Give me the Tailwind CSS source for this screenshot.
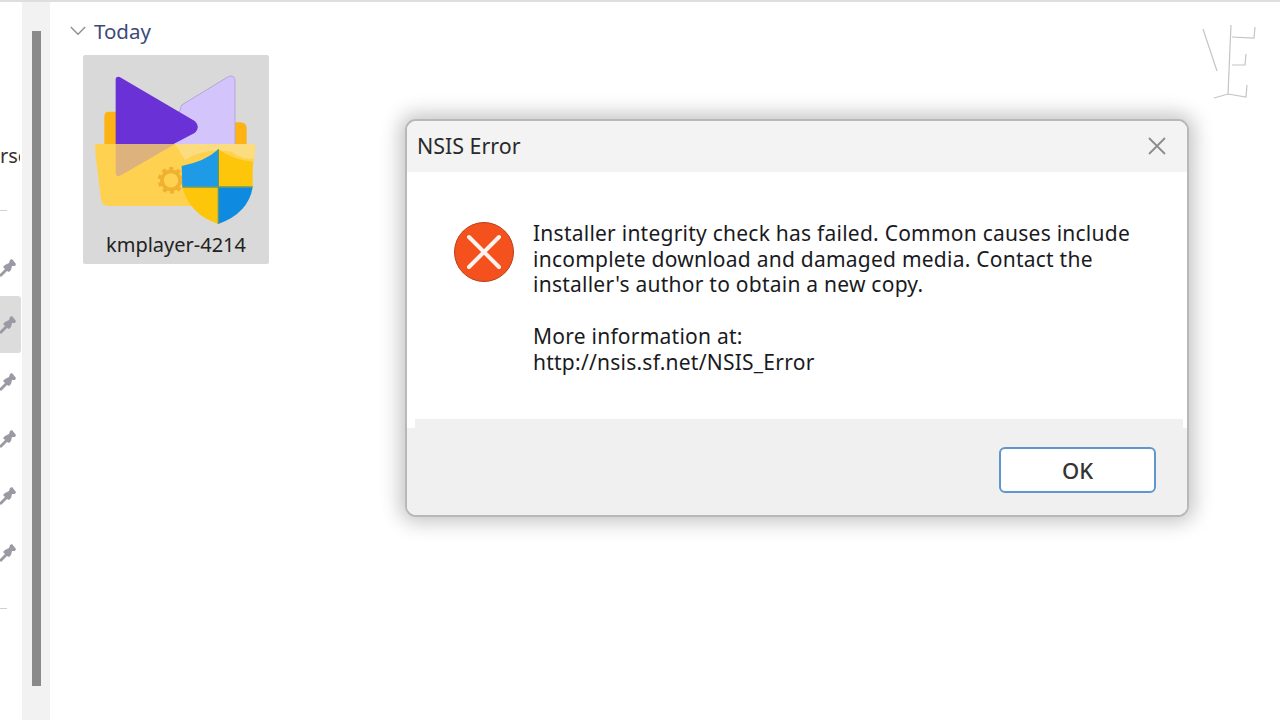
<!doctype html>
<html><head><meta charset="utf-8"><script src="https://cdn.jsdelivr.net/npm/@tailwindcss/browser@4"></script></head>
<body class="bg-white overflow-hidden">
<div class="relative flex w-[1280px] h-[720px] overflow-hidden bg-white border-t-2 border-[#dedede] font-['Noto_Sans',sans-serif]">
  <!-- Left nav sliver -->
  <aside class="w-[22px] shrink-0 flex flex-col overflow-hidden">
    <div class="h-[166px] shrink-0 flex items-end"><span class="block text-[20px] leading-[24px] text-[#333] whitespace-nowrap w-[20px] overflow-hidden">rsc</span></div>
    <div class="h-[43px] shrink-0 flex items-end"><div class="w-[7px] h-px bg-[#d0d0d0]"></div></div>
    <div class="mt-[28px] flex flex-col">
      <div class="h-[57px] flex items-center"><svg class="w-[16px] h-[20px]" viewBox="0 0 16 20"><path d="M-1 17 5 11 3 9 5 7 9 5 10 2 12 1 16 6 15 8 12 8 11 12 9 14 7 13 1 19Z" fill="#9a9aa4"/></svg></div>
      <div class="h-[57px] w-[21px] flex items-center bg-[#dcdcdc] rounded-r-[3px]"><svg class="w-[16px] h-[20px]" viewBox="0 0 16 20"><path d="M-1 17 5 11 3 9 5 7 9 5 10 2 12 1 16 6 15 8 12 8 11 12 9 14 7 13 1 19Z" fill="#9a9aa4"/></svg></div>
      <div class="h-[57px] flex items-center"><svg class="w-[16px] h-[20px]" viewBox="0 0 16 20"><path d="M-1 17 5 11 3 9 5 7 9 5 10 2 12 1 16 6 15 8 12 8 11 12 9 14 7 13 1 19Z" fill="#9a9aa4"/></svg></div>
      <div class="h-[57px] flex items-center"><svg class="w-[16px] h-[20px]" viewBox="0 0 16 20"><path d="M-1 17 5 11 3 9 5 7 9 5 10 2 12 1 16 6 15 8 12 8 11 12 9 14 7 13 1 19Z" fill="#9a9aa4"/></svg></div>
      <div class="h-[57px] flex items-center"><svg class="w-[16px] h-[20px]" viewBox="0 0 16 20"><path d="M-1 17 5 11 3 9 5 7 9 5 10 2 12 1 16 6 15 8 12 8 11 12 9 14 7 13 1 19Z" fill="#9a9aa4"/></svg></div>
      <div class="h-[57px] flex items-center"><svg class="w-[16px] h-[20px]" viewBox="0 0 16 20"><path d="M-1 17 5 11 3 9 5 7 9 5 10 2 12 1 16 6 15 8 12 8 11 12 9 14 7 13 1 19Z" fill="#9a9aa4"/></svg></div>
    </div>
    <div class="mt-[27px] w-[7px] h-px bg-[#d0d0d0] shrink-0"></div>
  </aside>
  <!-- Scroll strip -->
  <div class="w-[28px] shrink-0 bg-[#f2f2f2] pl-[10px] pt-[29px]"><div class="w-[9px] h-[655px] bg-[#8a8a8a]"></div></div>
  <!-- Content -->
  <main class="flex-1 pl-[20px] pt-[16px]">
    <div class="flex items-center gap-[8px] h-[26px]">
      <svg class="w-[16px] h-[10px]" viewBox="0 0 16 10" fill="none" stroke="#8a8f98" stroke-width="1.4"><path d="M.8 1 8 8.200 15.200 1"/></svg>
      <span class="text-[20.500px] text-[#3d4a78] leading-[26px]">Today</span>
    </div>
    <div class="mt-[11px] ml-[13px] w-[186px] h-[209px] bg-[#d9d9d9] rounded-[2px] flex flex-col items-center">
      <svg class="w-[180px] h-[170px] mt-[5px] shrink-0 self-start ml-[2px]" viewBox="0 0 540 510">
        <path d="M70 155Q58 155 58 170V260H485V205Q485 187 465 187H445V155Z" fill="#fdb314"/>
        <path d="M290 135 430 50Q450 42 450 65V260H250Z" fill="#d3c5fb" stroke="#b3a7d8" stroke-width="3" stroke-linejoin="round"/>
        <path d="M100 58 325 190Q335 200 325 212L100 330Z" fill="#6a31d6" stroke="#6a31d6" stroke-width="16" stroke-linejoin="round"/>
        <path d="M30 252H510Q512 280 500 340L480 420Q474 438 450 438H72Q52 438 48 420L32 290Z" fill="#fed250"/>
        <path d="M270 252H510Q512 270 508 296Q470 300 440 275Q360 262 300 300Z" fill="#fbdc7e"/>
        <path d="M92 252H270L108 346Q92 354 92 335Z" fill="#ddb27c"/>
        <circle cx="258" cy="361" r="34" fill="none" stroke="#f0b030" stroke-width="12" stroke-dasharray="12 10"/>
        <circle cx="258" cy="361" r="27" fill="none" stroke="#f0b030" stroke-width="11"/>
        <path d="M290 318 Q360 305 400 268V380H292Z" fill="#1e9ae6"/>
        <path d="M400 268Q445 300 503 305V380H400Z" fill="#fec60a"/>
        <path d="M292 382H400V492Q315 465 292 382Z" fill="#fec60a"/>
        <path d="M400 382H503Q490 460 400 492Z" fill="#0e8be0"/>
        <path d="M400 268V492M292 381H503" stroke="#5e9a6c" stroke-width="4"/>
      </svg>
      <span class="mt-[2px] text-[20px] leading-[26px] text-[#222]">kmplayer-4214</span>
    </div>
  </main>
  <!-- VE watermark -->
  <svg class="absolute left-[1200px] top-[22px] w-[64px] h-[78px]" viewBox="0 0 64 78" fill="none" stroke="#c4c4c4" stroke-width="1.200"><path d="M3 5 17 47M31 1 28 70M14 74 28 70 46 73 47 61M32 13 54 14 55 3M32 41 45 41 46 30"/></svg>
  <!-- Dialog -->
  <div class="absolute left-[405px] top-[117px] w-[784px] h-[398px] rounded-[11px] overflow-hidden bg-white border-2 border-[#b8b8b8] shadow-[0_0_20px_5px_rgba(0,0,0,0.24)] flex flex-col">
    <div class="h-[51px] shrink-0 bg-[#f3f3f3] flex items-center justify-between pl-[10px] pr-[20px] pb-[2px]">
      <span class="text-[21.400px] leading-[28px] text-[#2a2a2a]">NSIS Error</span>
      <svg class="w-[20px] h-[20px]" viewBox="0 0 20 20" stroke="#8c8c8c" stroke-width="1.800"><path d="M2 2 18 18M18 2 2 18"/></svg>
    </div>
    <div class="flex-1 flex items-start pl-[47px] pt-[50px]">
      <svg class="w-[60px] h-[60px] shrink-0" viewBox="0 0 60 60"><circle cx="30" cy="30" r="29.500" fill="#f4511e" stroke="#b5401c"/><path d="M15 15 45 45M45 15 15 45" stroke="#fff" stroke-width="4" stroke-linecap="round" opacity=".93"/></svg>
      <div class="ml-[19px] -mt-[1px] text-[21px] leading-[25.700px] text-[#1a1a22] whitespace-nowrap tracking-[0.24px]">
        <p>Installer integrity check has failed. Common causes include</p>
        <p>incomplete download and damaged media. Contact the</p>
        <p>installer's author to obtain a new copy.</p>
        <p class="mt-[25.700px]">More information at:</p>
        <p>http://nsis.sf.net/NSIS_Error</p>
      </div>
    </div>
    <div class="relative h-[96px] shrink-0 bg-[#f0f0f0] flex items-start justify-end pt-[28px] pr-[31px]">
      <div class="absolute left-0 top-0 w-[8px] h-[9px] bg-white"></div>
      <div class="absolute right-0 top-0 w-[4px] h-[9px] bg-white"></div>
      <button class="w-[157px] h-[46px] bg-white border-2 border-[#5f97cc] rounded-[6px] text-[22px] font-medium text-[#333] flex items-center justify-center">OK</button>
    </div>
  </div>
</div>
</body></html>
